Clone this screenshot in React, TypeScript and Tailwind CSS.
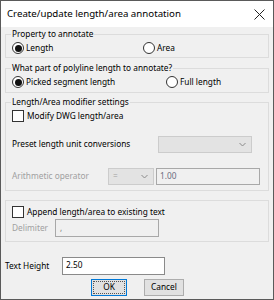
import React from 'react';

function Radio({ checked, label }: { checked?: boolean; label: string }) {
  return (
    <span className="flex items-center">
      <span className="flex h-[12px] w-[12px] items-center justify-center rounded-full border border-[#333] bg-white">
        {checked && <span className="h-[7px] w-[7px] rounded-full bg-[#111]" />}
      </span>
      <span className="ml-[2px]">{label}</span>
    </span>
  );
}

function Check({ label }: { label: string }) {
  return (
    <span className="flex items-center">
      <span className="h-[12px] w-[12px] border border-[#333] bg-white" />
      <span className="ml-[3px]">{label}</span>
    </span>
  );
}

function Chevron() {
  return (
    <svg width="7" height="5" viewBox="0 0 7 5" className="text-[#8a8a8a]">
      <path d="M0.5 1 L3.5 4 L6.5 1" fill="none" stroke="currentColor" strokeWidth="1" />
    </svg>
  );
}

export default function App() {
  return (
    <div
      className="flex h-[300px] w-[274px] flex-col border border-[#5a5a5a] text-[8.3px] text-black"
      style={{ fontFamily: '"Noto Sans", "Open Sans", sans-serif' }}
    >
      <div className="flex h-[26px] shrink-0 items-center justify-between bg-white pl-[6px] pr-[8px]">
        <span className="text-[9.7px] text-black">Create/update length/area annotation</span>
        <svg width="11" height="11" viewBox="0 0 11 11">
          <path d="M0.5 0.5 L10.5 10.5 M10.5 0.5 L0.5 10.5" stroke="#222" strokeWidth="1" />
        </svg>
      </div>

      <div className="flex flex-1 flex-col bg-[#f0f0f0] px-[4px]">
        <fieldset className="border border-[#dcdcdc] pb-[2px] pl-[6px]">
          <legend className="-ml-[1px] px-[1px] leading-[14px]">Property to annotate</legend>
          <div className="flex h-[14px] items-center">
            <div className="w-[131px]">
              <Radio checked label="Length" />
            </div>
            <Radio label="Area" />
          </div>
        </fieldset>

        <fieldset className="mt-[3px] border border-[#dcdcdc] pb-[3px] pl-[6px]">
          <legend className="-ml-[1px] px-[1px] leading-[14px]">What part of polyline length to annotate?</legend>
          <div className="flex h-[14px] items-center">
            <div className="w-[154px]">
              <Radio checked label="Picked segment length" />
            </div>
            <Radio label="Full length" />
          </div>
        </fieldset>

        <fieldset className="mt-[2px] border border-[#dcdcdc] pb-[5px] pl-[6px]">
          <legend className="-ml-[1px] px-[1px] leading-[14px]">Length/Area modifier settings</legend>
          <div className="flex h-[14px] items-center">
            <Check label="Modify DWG length/area" />
          </div>
          <div className="mt-[13px] flex h-[17px] items-center">
            <span className="w-[146px]">Preset length unit conversions</span>
            <div className="flex h-[17px] w-[94px] items-center justify-end border border-[#cccccc] bg-[#e3e3e3] pr-[5px]">
              <Chevron />
            </div>
          </div>
          <div className="mt-[15px] flex h-[17px] items-center">
            <span className="w-[96px] text-[#a0a0a0]">Arithmetic operator</span>
            <div className="flex h-[17px] w-[46px] items-center justify-between border border-[#cccccc] bg-[#e3e3e3] pl-[4px] pr-[5px] text-[#a0a0a0]">
              <span>=</span>
              <Chevron />
            </div>
            <div className="ml-[2px] h-[17px] w-[104px] border border-[#a8a8a8] bg-[#f0f0f0] pl-[3px] leading-[14px] text-[#6d6d80]">
              1.00
            </div>
          </div>
        </fieldset>

        <fieldset className="mt-[9px] border border-[#dcdcdc] pb-[4px] pl-[6px] pt-[4px]">
          <div className="flex h-[14px] items-center">
            <Check label="Append length/area to existing text" />
          </div>
          <div className="flex h-[18px] items-center">
            <span className="w-[43px] text-[#a0a0a0]">Delimiter</span>
            <div className="h-[18px] w-[104px] border border-[#a8a8a8] bg-[#f0f0f0] pl-[4px] leading-[15px] text-[#808080]">
              ,
            </div>
          </div>
        </fieldset>

        <div className="mt-[15px] flex h-[18px] items-center">
          <span className="w-[57px]">Text Height</span>
          <div className="h-[18px] w-[103px] border border-[#8a8a8a] bg-white pl-[3px] leading-[14px] text-black">
            2.50
          </div>
        </div>

        <div className="mt-[4px] flex h-[17px] items-center">
          <div className="ml-[86px] flex h-[17px] w-[36px] items-center justify-center border border-[#0078d7] bg-[#e1e1e1] text-black">
            <span className="flex h-[13px] w-[32px] items-center justify-center border border-dotted border-[#555]">OK</span>
          </div>
          <div className="ml-[17px] flex h-[17px] w-[40px] items-center justify-center border border-[#adadad] bg-[#e1e1e1] text-black">
            Cancel
          </div>
        </div>
      </div>
    </div>
  );
}
